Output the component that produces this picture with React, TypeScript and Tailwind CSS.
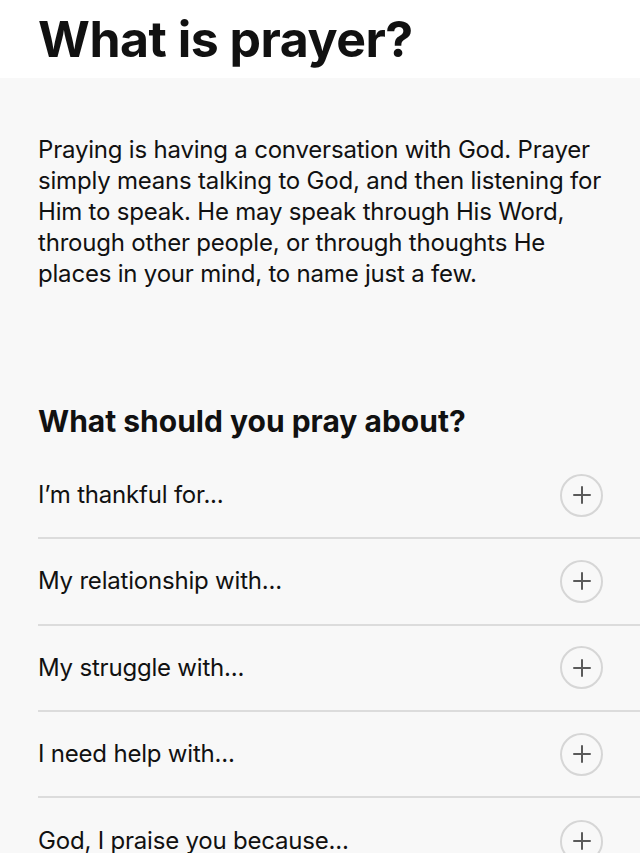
import React from "react";

const items = [
  "I\u2019m thankful for...",
  "My relationship with...",
  "My struggle with...",
  "I need help with...",
  "God, I praise you because...",
];

function PlusCircle() {
  return (
    <div className="w-[43px] h-[43px] rounded-full border-2 border-[#d6d6d6] flex items-center justify-center shrink-0">
      <svg width="20" height="20" viewBox="0 0 20 20" fill="none">
        <path d="M10 2v16M2 10h16" stroke="#5a5a5a" strokeWidth="2" strokeLinecap="round" />
      </svg>
    </div>
  );
}

export default function App() {
  return (
    <div
      className="w-[640px] h-[853px] overflow-hidden bg-[#f8f8f8] text-[#111]"
      style={{ fontFamily: "Inter, 'Noto Sans', sans-serif" }}
    >
      <header className="bg-white h-[78px] px-[38px] pt-[10px]">
        <h1 className="text-[50px] leading-[58px] font-bold tracking-[-0.5px]">What is prayer?</h1>
      </header>
      <main className="pl-[38px]">
        <p className="pt-[56px] pr-[38px] text-[24px] leading-[31px] tracking-[-0.2px]">
          Praying is having a conversation with God. Prayer simply means talking to God, and then listening for Him to
          speak. He may speak through His Word, through other people, or through thoughts He places in your mind, to
          name just a few.
        </p>
        <h2 className="mt-[114px] text-[30px] leading-[36px] font-bold">What should you pray about?</h2>
        <ul className="mt-[14px]">
          {items.map((t, i) => (
            <li
              key={t}
              className={`h-[86.3px] flex items-center justify-between pr-[37px] ${i < items.length - 1 ? "border-b-2 border-[#dcdcdc]" : ""}`}
            >
              <span className="text-[24px] tracking-[-0.2px]">{t}</span>
              <PlusCircle />
            </li>
          ))}
        </ul>
      </main>
    </div>
  );
}
